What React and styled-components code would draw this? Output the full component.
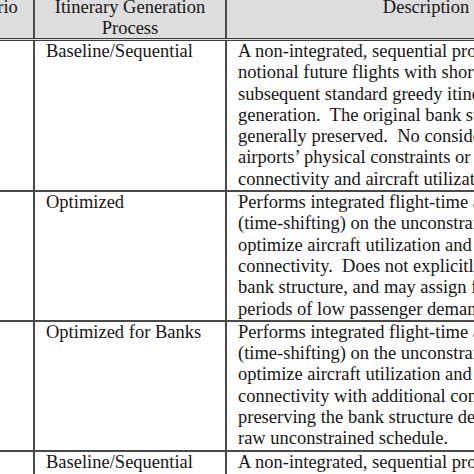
import React from 'react'
import styled, { createGlobalStyle } from 'styled-components'

const GlobalStyle = createGlobalStyle`
  html, body {
    margin:0;
    padding:0;
    background:#ffffff;
  }
  body {
    width:474px;
    height:474px;
    overflow:hidden;
  }
`;

const Page = styled.div`
  width:474px;
  height:474px;
  overflow:hidden;
  background:#ffffff;
`;

const Table = styled.table`
  border-collapse:collapse;
  table-layout:fixed;
  width:689px;
  margin-left:-64px;
  margin-top:-3px;
  font-family:"Liberation Serif", "Times New Roman", serif;
  font-size:18.5px;
  line-height:21.3px;
  color:#161616;
`;

const HeadCell = styled.th`
  font-weight:400;
  text-align:center;
  vertical-align:top;
  line-height:20.5px;
  background:#dedede;
  padding:0;
  border-left:2px solid #4a4a4a;
  border-right:2px solid #4a4a4a;
  border-bottom:3px double #3c3c3c;
`;

const Cell = styled.td`
  vertical-align:top;
  padding:0 0 0 ${props => props.$pad}px;
  border-left:2px solid #4a4a4a;
  border-right:2px solid #4a4a4a;
  border-bottom:2px solid #4a4a4a;
  overflow:hidden;
`;

const Line = styled.div`
  white-space:pre;
`;

const rows = [
  {
    process: 'Baseline/Sequential',
    lines: [
      'A non-integrated, sequential process of scheduling',
      'notional future flights with short turn times and',
      'subsequent standard greedy itinerary',
      'generation.  The original bank structure is',
      'generally preserved.  No consideration for',
      'airports\u2019 physical constraints or passenger',
      'connectivity and aircraft utilization.',
    ],
  },
  {
    process: 'Optimized',
    lines: [
      'Performs integrated flight-time adjustments',
      '(time-shifting) on the unconstrained schedule to',
      'optimize aircraft utilization and passenger',
      'connectivity.  Does not explicitly preserve the',
      'bank structure, and may assign flights to',
      'periods of low passenger demand.',
    ],
  },
  {
    process: 'Optimized for Banks',
    lines: [
      'Performs integrated flight-time adjustments',
      '(time-shifting) on the unconstrained schedule to',
      'optimize aircraft utilization and passenger',
      'connectivity with additional constraints',
      'preserving the bank structure derived from the',
      'raw unconstrained schedule.',
    ],
  },
  {
    process: 'Baseline/Sequential',
    lines: [
      'A non-integrated, sequential process of scheduling',
      'notional future flights with short turn times and',
    ],
  },
]

const App = () => {
  return (
    <>
      <GlobalStyle />
      <Page>
        <Table>
          <colgroup>
            <col style={{ width: 97 }} />
            <col style={{ width: 192 }} />
            <col style={{ width: 400 }} />
          </colgroup>
          <thead>
            <tr>
              <HeadCell>Scenario</HeadCell>
              <HeadCell>Itinerary Generation<br />Process</HeadCell>
              <HeadCell>Description<br />&nbsp;</HeadCell>
            </tr>
          </thead>
          <tbody>
            {rows.map((row, index) => (
              <tr key={index}>
                <Cell $pad={8}></Cell>
                <Cell $pad={11}>{row.process}</Cell>
                <Cell $pad={11}>
                  {row.lines.map((text, i) => (
                    <Line key={i}>{text}</Line>
                  ))}
                </Cell>
              </tr>
            ))}
          </tbody>
        </Table>
      </Page>
    </>
  )
}

export default App
